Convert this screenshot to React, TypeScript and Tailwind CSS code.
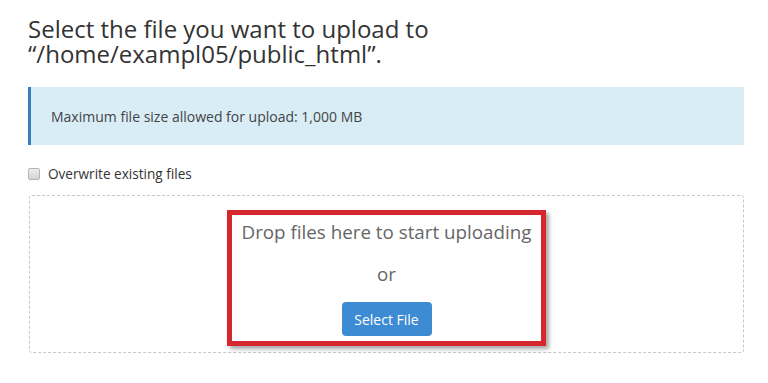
import React from 'react';

const font = { fontFamily: '"Open Sans", "Liberation Sans", sans-serif' };

const App: React.FC = () => {
  return (
    <div className="min-h-[383px] w-[768px] bg-white pl-[28px] pr-[24px] pt-[16px] text-[#333]" style={font}>
      {/* Page heading */}
      <h1 className="text-[24px] leading-[25px] font-normal text-[#333]">
        Select the file you want to upload to
        <br />
        “/home/exampl05/public_html”.
      </h1>

      {/* Info alert */}
      <div className="mt-[21px] border-l-[3px] border-[#3a7db6] bg-[#d9edf7] pt-[21px] pb-[19px] pl-[20px] text-[14px] leading-[18px] text-[#444]">
        Maximum file size allowed for upload: 1,000 MB
      </div>

      {/* Overwrite option */}
      <label className="mt-[20px] flex items-center gap-[8px] text-[13.6px] leading-[18px] text-[#333]">
        <span className="h-[12px] w-[12px] rounded-[2px] border border-[#b5b5b5] bg-gradient-to-b from-[#eee] to-[#d4d4d4]" />
        Overwrite existing files
      </label>

      {/* Drop zone */}
      <div className="mt-[12px] ml-[1px] flex h-[158px] w-[715px] justify-center rounded-[3px] border border-dashed border-[#c8c8c8] pt-[14px]">
        <div className="flex h-[136px] w-[319px] flex-col items-center border-[5px] border-[#d7272e] pt-[5px] shadow-[3px_3px_4px_rgba(0,0,0,0.35)]">
          <p className="whitespace-nowrap text-[18.8px] leading-[24px] text-[#666]">Drop files here to start uploading</p>
          <p className="mt-[18px] text-[18.8px] leading-[24px] text-[#666]">or</p>
          <button className="mt-[16px] h-[34px] w-[90px] rounded-[4px] bg-[#3d8bd3] text-[14px] text-white">
            Select File
          </button>
        </div>
      </div>
    </div>
  );
};

export default App;
